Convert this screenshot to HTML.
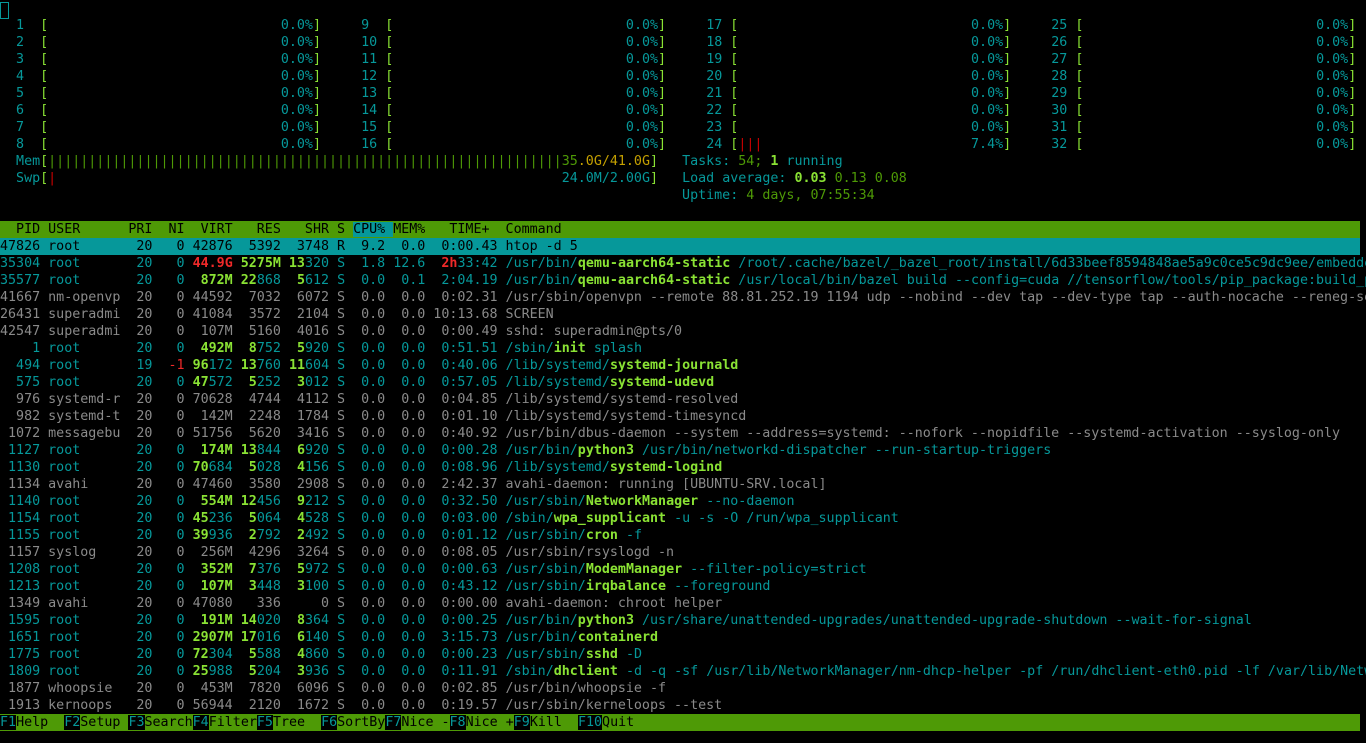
<!DOCTYPE html>
<html><head><meta charset="utf-8">
<style>
html,body{margin:0;padding:0;background:#000;width:1366px;height:743px;overflow:hidden}
.l{position:absolute;left:0;width:1366px;height:17px;line-height:17px;white-space:pre;overflow:hidden;font-family:"DejaVu Sans Mono","Liberation Mono",monospace;font-size:13.34px;color:#06989a}
.g{color:#8ae234;font-weight:bold}
.d{color:#4e9a06}
.k{color:#8ae234}
.r{color:#ef2929;font-weight:bold}
.rn{color:#ef2929}
.R{color:#cc0000}
.y{color:#c4a000}
.x{color:#8a8a8a}
.hd{background:#4e9a06;color:#000;width:1360px}
.sel{background:#06989a;color:#000;width:1360px}
.cb{background:#06989a}
.fk{color:#06989a}
.fl{background:#4e9a06;color:#000}
#cur{position:absolute;left:0;top:2px;width:7px;height:15px;border:1px solid #06989a}
</style></head><body>
<div id="cur"></div>
<div class="l" style="top:17px">  1  <span class="k">[</span>                             0.0%<span class="k">]</span>     9  <span class="k">[</span>                             0.0%<span class="k">]</span>     17 <span class="k">[</span>                             0.0%<span class="k">]</span>     25 <span class="k">[</span>                             0.0%<span class="k">]</span></div>
<div class="l" style="top:34px">  2  <span class="k">[</span>                             0.0%<span class="k">]</span>     10 <span class="k">[</span>                             0.0%<span class="k">]</span>     18 <span class="k">[</span>                             0.0%<span class="k">]</span>     26 <span class="k">[</span>                             0.0%<span class="k">]</span></div>
<div class="l" style="top:51px">  3  <span class="k">[</span>                             0.0%<span class="k">]</span>     11 <span class="k">[</span>                             0.0%<span class="k">]</span>     19 <span class="k">[</span>                             0.0%<span class="k">]</span>     27 <span class="k">[</span>                             0.0%<span class="k">]</span></div>
<div class="l" style="top:68px">  4  <span class="k">[</span>                             0.0%<span class="k">]</span>     12 <span class="k">[</span>                             0.0%<span class="k">]</span>     20 <span class="k">[</span>                             0.0%<span class="k">]</span>     28 <span class="k">[</span>                             0.0%<span class="k">]</span></div>
<div class="l" style="top:85px">  5  <span class="k">[</span>                             0.0%<span class="k">]</span>     13 <span class="k">[</span>                             0.0%<span class="k">]</span>     21 <span class="k">[</span>                             0.0%<span class="k">]</span>     29 <span class="k">[</span>                             0.0%<span class="k">]</span></div>
<div class="l" style="top:102px">  6  <span class="k">[</span>                             0.0%<span class="k">]</span>     14 <span class="k">[</span>                             0.0%<span class="k">]</span>     22 <span class="k">[</span>                             0.0%<span class="k">]</span>     30 <span class="k">[</span>                             0.0%<span class="k">]</span></div>
<div class="l" style="top:119px">  7  <span class="k">[</span>                             0.0%<span class="k">]</span>     15 <span class="k">[</span>                             0.0%<span class="k">]</span>     23 <span class="k">[</span>                             0.0%<span class="k">]</span>     31 <span class="k">[</span>                             0.0%<span class="k">]</span></div>
<div class="l" style="top:136px">  8  <span class="k">[</span>                             0.0%<span class="k">]</span>     16 <span class="k">[</span>                             0.0%<span class="k">]</span>     24 <span class="k">[</span><span class="R">|||</span>                          7.4%<span class="k">]</span>     32 <span class="k">[</span>                             0.0%<span class="k">]</span></div>
<div class="l" style="top:153px">  Mem<span class="k">[</span><span class="d">||||||||||||||||||||||||||||||||||||||||||||||||||||||||||||||||35</span><span class="y">.0G/41.0G</span><span class="k">]</span>   Tasks: <span class="d">54;</span> <span class="g">1</span> running</div>
<div class="l" style="top:170px">  Swp<span class="k">[</span><span class="R">|</span>                                                               24.0M/2.00G<span class="k">]</span>   Load average: <span class="g">0.03</span> <span class="d">0.13 0.08</span></div>
<div class="l" style="top:187px">                                                                                     Uptime: <span class="d">4 days, 07:55:34</span></div>
<div class="l hd" style="top:221px">  PID USER      PRI  NI  VIRT   RES   SHR S <span class="cb">CPU% </span>MEM%   TIME+  Command</div>
<div class="l sel" style="top:238px">47826 root       20   0 42876  5392  3748 R  9.2  0.0  0:00.43 htop -d 5</div>
<div class="l" style="top:255px">35304 root       20   0 <span class="r">44.9G</span> <span class="g">5275M</span> <span class="g">13</span>320 S  1.8 12.6  <span class="r">2h</span>33:42 /usr/bin/<span class="g">qemu-aarch64-static</span> /root/.cache/bazel/_bazel_root/install/6d33beef8594848ae5a9c0ce5c9dc9ee/embedded_tools</div>
<div class="l" style="top:272px">35577 root       20   0  <span class="g">872M</span> <span class="g">22</span>868  <span class="g">5</span>612 S  0.0  0.1  2:04.19 /usr/bin/<span class="g">qemu-aarch64-static</span> /usr/local/bin/bazel build --config=cuda //tensorflow/tools/pip_package:build_pip</div>
<div class="l x" style="top:289px">41667 nm-openvp  20   0 44592  7032  6072 S  0.0  0.0  0:02.31 /usr/sbin/openvpn --remote 88.81.252.19 1194 udp --nobind --dev tap --dev-type tap --auth-nocache --reneg-sec</div>
<div class="l x" style="top:306px">26431 superadmi  20   0 41084  3572  2104 S  0.0  0.0 10:13.68 SCREEN</div>
<div class="l x" style="top:323px">42547 superadmi  20   0  107M  5160  4016 S  0.0  0.0  0:00.49 sshd: superadmin@pts/0</div>
<div class="l" style="top:340px">    1 root       20   0  <span class="g">492M</span>  <span class="g">8</span>752  <span class="g">5</span>920 S  0.0  0.0  0:51.51 /sbin/<span class="g">init</span> splash</div>
<div class="l" style="top:357px">  494 root       19  <span class="rn">-1</span> <span class="g">96</span>172 <span class="g">13</span>760 <span class="g">11</span>604 S  0.0  0.0  0:40.06 /lib/systemd/<span class="g">systemd-journald</span></div>
<div class="l" style="top:374px">  575 root       20   0 <span class="g">47</span>572  <span class="g">5</span>252  <span class="g">3</span>012 S  0.0  0.0  0:57.05 /lib/systemd/<span class="g">systemd-udevd</span></div>
<div class="l x" style="top:391px">  976 systemd-r  20   0 70628  4744  4112 S  0.0  0.0  0:04.85 /lib/systemd/systemd-resolved</div>
<div class="l x" style="top:408px">  982 systemd-t  20   0  142M  2248  1784 S  0.0  0.0  0:01.10 /lib/systemd/systemd-timesyncd</div>
<div class="l x" style="top:425px"> 1072 messagebu  20   0 51756  5620  3416 S  0.0  0.0  0:40.92 /usr/bin/dbus-daemon --system --address=systemd: --nofork --nopidfile --systemd-activation --syslog-only</div>
<div class="l" style="top:442px"> 1127 root       20   0  <span class="g">174M</span> <span class="g">13</span>844  <span class="g">6</span>920 S  0.0  0.0  0:00.28 /usr/bin/<span class="g">python3</span> /usr/bin/networkd-dispatcher --run-startup-triggers</div>
<div class="l" style="top:459px"> 1130 root       20   0 <span class="g">70</span>684  <span class="g">5</span>028  <span class="g">4</span>156 S  0.0  0.0  0:08.96 /lib/systemd/<span class="g">systemd-logind</span></div>
<div class="l x" style="top:476px"> 1134 avahi      20   0 47460  3580  2908 S  0.0  0.0  2:42.37 avahi-daemon: running [UBUNTU-SRV.local]</div>
<div class="l" style="top:493px"> 1140 root       20   0  <span class="g">554M</span> <span class="g">12</span>456  <span class="g">9</span>212 S  0.0  0.0  0:32.50 /usr/sbin/<span class="g">NetworkManager</span> --no-daemon</div>
<div class="l" style="top:510px"> 1154 root       20   0 <span class="g">45</span>236  <span class="g">5</span>064  <span class="g">4</span>528 S  0.0  0.0  0:03.00 /sbin/<span class="g">wpa_supplicant</span> -u -s -O /run/wpa_supplicant</div>
<div class="l" style="top:527px"> 1155 root       20   0 <span class="g">39</span>936  <span class="g">2</span>792  <span class="g">2</span>492 S  0.0  0.0  0:01.12 /usr/sbin/<span class="g">cron</span> -f</div>
<div class="l x" style="top:544px"> 1157 syslog     20   0  256M  4296  3264 S  0.0  0.0  0:08.05 /usr/sbin/rsyslogd -n</div>
<div class="l" style="top:561px"> 1208 root       20   0  <span class="g">352M</span>  <span class="g">7</span>376  <span class="g">5</span>972 S  0.0  0.0  0:00.63 /usr/sbin/<span class="g">ModemManager</span> --filter-policy=strict</div>
<div class="l" style="top:578px"> 1213 root       20   0  <span class="g">107M</span>  <span class="g">3</span>448  <span class="g">3</span>100 S  0.0  0.0  0:43.12 /usr/sbin/<span class="g">irqbalance</span> --foreground</div>
<div class="l x" style="top:595px"> 1349 avahi      20   0 47080   336     0 S  0.0  0.0  0:00.00 avahi-daemon: chroot helper</div>
<div class="l" style="top:612px"> 1595 root       20   0  <span class="g">191M</span> <span class="g">14</span>020  <span class="g">8</span>364 S  0.0  0.0  0:00.25 /usr/bin/<span class="g">python3</span> /usr/share/unattended-upgrades/unattended-upgrade-shutdown --wait-for-signal</div>
<div class="l" style="top:629px"> 1651 root       20   0 <span class="g">2907M</span> <span class="g">17</span>016  <span class="g">6</span>140 S  0.0  0.0  3:15.73 /usr/bin/<span class="g">containerd</span></div>
<div class="l" style="top:646px"> 1775 root       20   0 <span class="g">72</span>304  <span class="g">5</span>588  <span class="g">4</span>860 S  0.0  0.0  0:00.23 /usr/sbin/<span class="g">sshd</span> -D</div>
<div class="l" style="top:663px"> 1809 root       20   0 <span class="g">25</span>988  <span class="g">5</span>204  <span class="g">3</span>936 S  0.0  0.0  0:11.91 /sbin/<span class="g">dhclient</span> -d -q -sf /usr/lib/NetworkManager/nm-dhcp-helper -pf /run/dhclient-eth0.pid -lf /var/lib/NetworkManager/dhclient</div>
<div class="l x" style="top:680px"> 1877 whoopsie   20   0  453M  7820  6096 S  0.0  0.0  0:02.85 /usr/bin/whoopsie -f</div>
<div class="l x" style="top:697px"> 1913 kernoops   20   0 56944  2120  1672 S  0.0  0.0  0:19.57 /usr/sbin/kerneloops --test</div>
<div class="l" style="top:714px;width:1360px;background:#4e9a06;color:#000"><span style="background:#000;color:#06989a">F1</span>Help  <span style="background:#000;color:#06989a">F2</span>Setup <span style="background:#000;color:#06989a">F3</span>Search<span style="background:#000;color:#06989a">F4</span>Filter<span style="background:#000;color:#06989a">F5</span>Tree  <span style="background:#000;color:#06989a">F6</span>SortBy<span style="background:#000;color:#06989a">F7</span>Nice -<span style="background:#000;color:#06989a">F8</span>Nice +<span style="background:#000;color:#06989a">F9</span>Kill  <span style="background:#000;color:#06989a">F10</span>Quit</div>
</body></html>
